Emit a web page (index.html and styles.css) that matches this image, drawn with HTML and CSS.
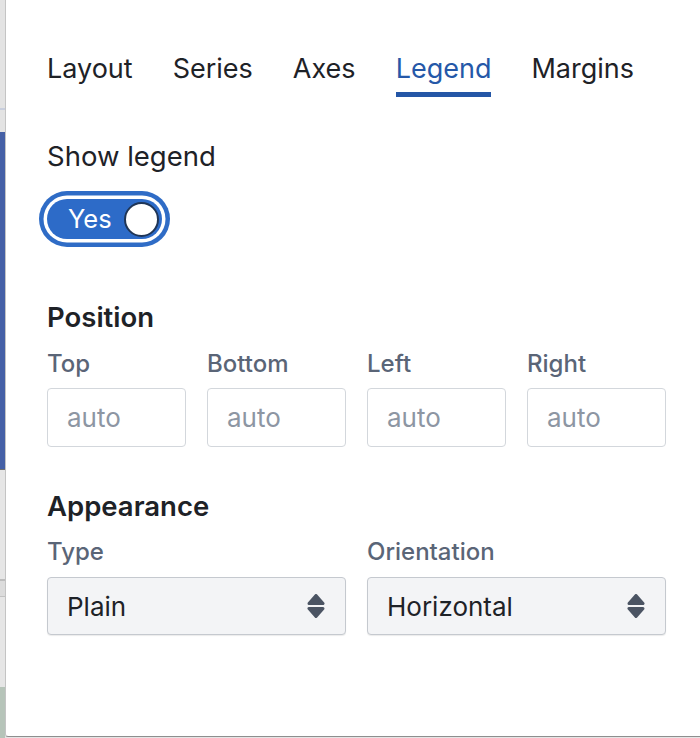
FILE: index.html
```html
<!DOCTYPE html>
<html lang="en">
<head>
<meta charset="utf-8">
<title>Legend settings</title>
<link rel="stylesheet" href="styles.css">
</head>
<body>
  <div class="backdrop">
    <div class="bd bd-a"></div>
    <div class="bd bd-line1"></div>
    <div class="bd bd-b"></div>
    <div class="bd bd-blue"></div>
    <div class="bd bd-dark"></div>
    <div class="bd bd-c"></div>
    <div class="bd bd-line2"></div>
    <div class="bd bd-d"></div>
    <div class="bd bd-line3"></div>
    <div class="bd bd-e"></div>
    <div class="bd bd-green"></div>
  </div>
  <div class="panel">
    <nav class="tabs">
      <span class="tab">Layout</span>
      <span class="tab">Series</span>
      <span class="tab">Axes</span>
      <span class="tab active">Legend</span>
      <span class="tab">Margins</span>
    </nav>

    <div class="field-title">Show legend</div>
    <div class="toggle-row">
      <button class="toggle" type="button"><span class="toggle-text">Yes</span><span class="knob"></span></button>
    </div>

    <h3 class="section position">Position</h3>
    <div class="grid four">
      <label class="field"><span class="label">Top</span><input class="input" placeholder="auto"></label>
      <label class="field"><span class="label">Bottom</span><input class="input" placeholder="auto"></label>
      <label class="field"><span class="label">Left</span><input class="input" placeholder="auto"></label>
      <label class="field"><span class="label">Right</span><input class="input" placeholder="auto"></label>
    </div>

    <h3 class="section appearance">Appearance</h3>
    <div class="grid two">
      <div class="field">
        <span class="label label-tight">Type</span>
        <div class="select"><span>Plain</span>
          <svg class="arrows" width="18" height="24" viewBox="0 0 18 24"><path d="M9 1.5 L16 9.5 H2 Z" /><path d="M2 14.5 H16 L9 22.5 Z" /></svg>
        </div>
      </div>
      <div class="field">
        <span class="label label-tight">Orientation</span>
        <div class="select"><span>Horizontal</span>
          <svg class="arrows" width="18" height="24" viewBox="0 0 18 24"><path d="M9 1.5 L16 9.5 H2 Z" /><path d="M2 14.5 H16 L9 22.5 Z" /></svg>
        </div>
      </div>
    </div>
  </div>
</body>
</html>
```

FILE: styles.css
```css
* { box-sizing: border-box; }

html, body {
  margin: 0;
  padding: 0;
}

body {
  width: 700px;
  height: 738px;
  overflow: hidden;
  display: flex;
  background: #e5e5e5;
  font-family: Inter, "Noto Sans", "Liberation Sans", sans-serif;
  color: #1e2227;
}

.backdrop {
  width: 5px;
  flex: 0 0 5px;
  display: flex;
  flex-direction: column;
}

.bd { width: 100%; }
.bd-a { height: 108px; background: #e3e3e3; }
.bd-line1 { height: 2px; background: #c8cedd; }
.bd-b { height: 22px; background: #e3e3e3; }
.bd-blue { height: 337px; background: #4560a6; }
.bd-dark { height: 1px; background: #6e6e6e; }
.bd-c { height: 109px; background: #e6e6e6; }
.bd-line2 { height: 2px; background: #bdbdbd; }
.bd-d { height: 15px; background: #dcdcdc; }
.bd-line3 { height: 1px; background: #c2c2c2; }
.bd-e { height: 90px; background: #e6e6e6; }
.bd-green { flex: 1; background: #b6c4b9; }

.panel {
  flex: 1;
  height: 737px;
  background: #fff;
  border-left: 1px solid #c4c4c4;
  border-bottom: 1px solid #8e8e8e;
  border-bottom-left-radius: 3px;
  padding: 52px 34px 0 41px;
}

.tabs {
  display: flex;
  gap: 40px;
}

.tab {
  font-size: 27px;
  line-height: 33px;
  padding-bottom: 7px;
  border-bottom: 5px solid transparent;
  color: #1e2227;
}

.tab.active {
  color: #2558a8;
  border-bottom-color: #2456a6;
}

.field-title {
  margin-top: 43px;
  font-size: 27.5px;
  line-height: 33px;
}

.toggle-row {
  margin-top: 26px;
  display: flex;
}

.toggle {
  width: 115px;
  height: 40px;
  border: 0;
  border-radius: 20px;
  background: #2d6bc8;
  box-shadow: 0 0 0 3.5px #fff, 0 0 0 8px #2f6cc6;
  display: flex;
  align-items: center;
  justify-content: space-between;
  padding: 0 3px 0 21px;
  font-family: inherit;
  cursor: pointer;
}

.toggle-text {
  color: #fff;
  font-size: 25.5px;
  line-height: 30px;
}

.knob {
  width: 35px;
  height: 35px;
  border-radius: 50%;
  background: #fff;
  border: 2px solid #1f3556;
}

.section {
  margin: 0;
  font-size: 27.5px;
  line-height: 33px;
  font-weight: 600;
  color: #1e2227;
}

.position { margin-top: 62px; }
.appearance { margin-top: 43px; }

.grid {
  display: grid;
  gap: 21px;
}

.grid.four { grid-template-columns: repeat(4, 1fr); margin-top: 16px; }
.grid.two { grid-template-columns: repeat(2, 1fr); margin-top: 15px; }

.field {
  display: flex;
  flex-direction: column;
}

.label {
  font-size: 24px;
  line-height: 28px;
  font-weight: 500;
  color: #5a6577;
  margin-bottom: 10px;
}

.label-tight { margin-bottom: 11px; }

.input {
  width: 100%;
  height: 59px;
  border: 1px solid #d3d7dc;
  border-radius: 4px;
  padding: 0 19px;
  font-family: inherit;
  font-size: 26px;
  color: #1e2227;
  background: #fff;
  outline: none;
}

.input::placeholder { color: #8d96a3; }

.select {
  height: 58px;
  border: 1px solid #c5c9cf;
  border-radius: 4px;
  background: #f3f4f6;
  box-shadow: 0 1px 1px rgba(0, 0, 0, 0.08);
  display: flex;
  align-items: center;
  justify-content: space-between;
  padding: 0 20px 0 19px;
  font-size: 26px;
  color: #1e2227;
}

.arrows path {
  fill: #4b5463;
  stroke: #4b5463;
  stroke-width: 3;
  stroke-linejoin: round;
}
```
